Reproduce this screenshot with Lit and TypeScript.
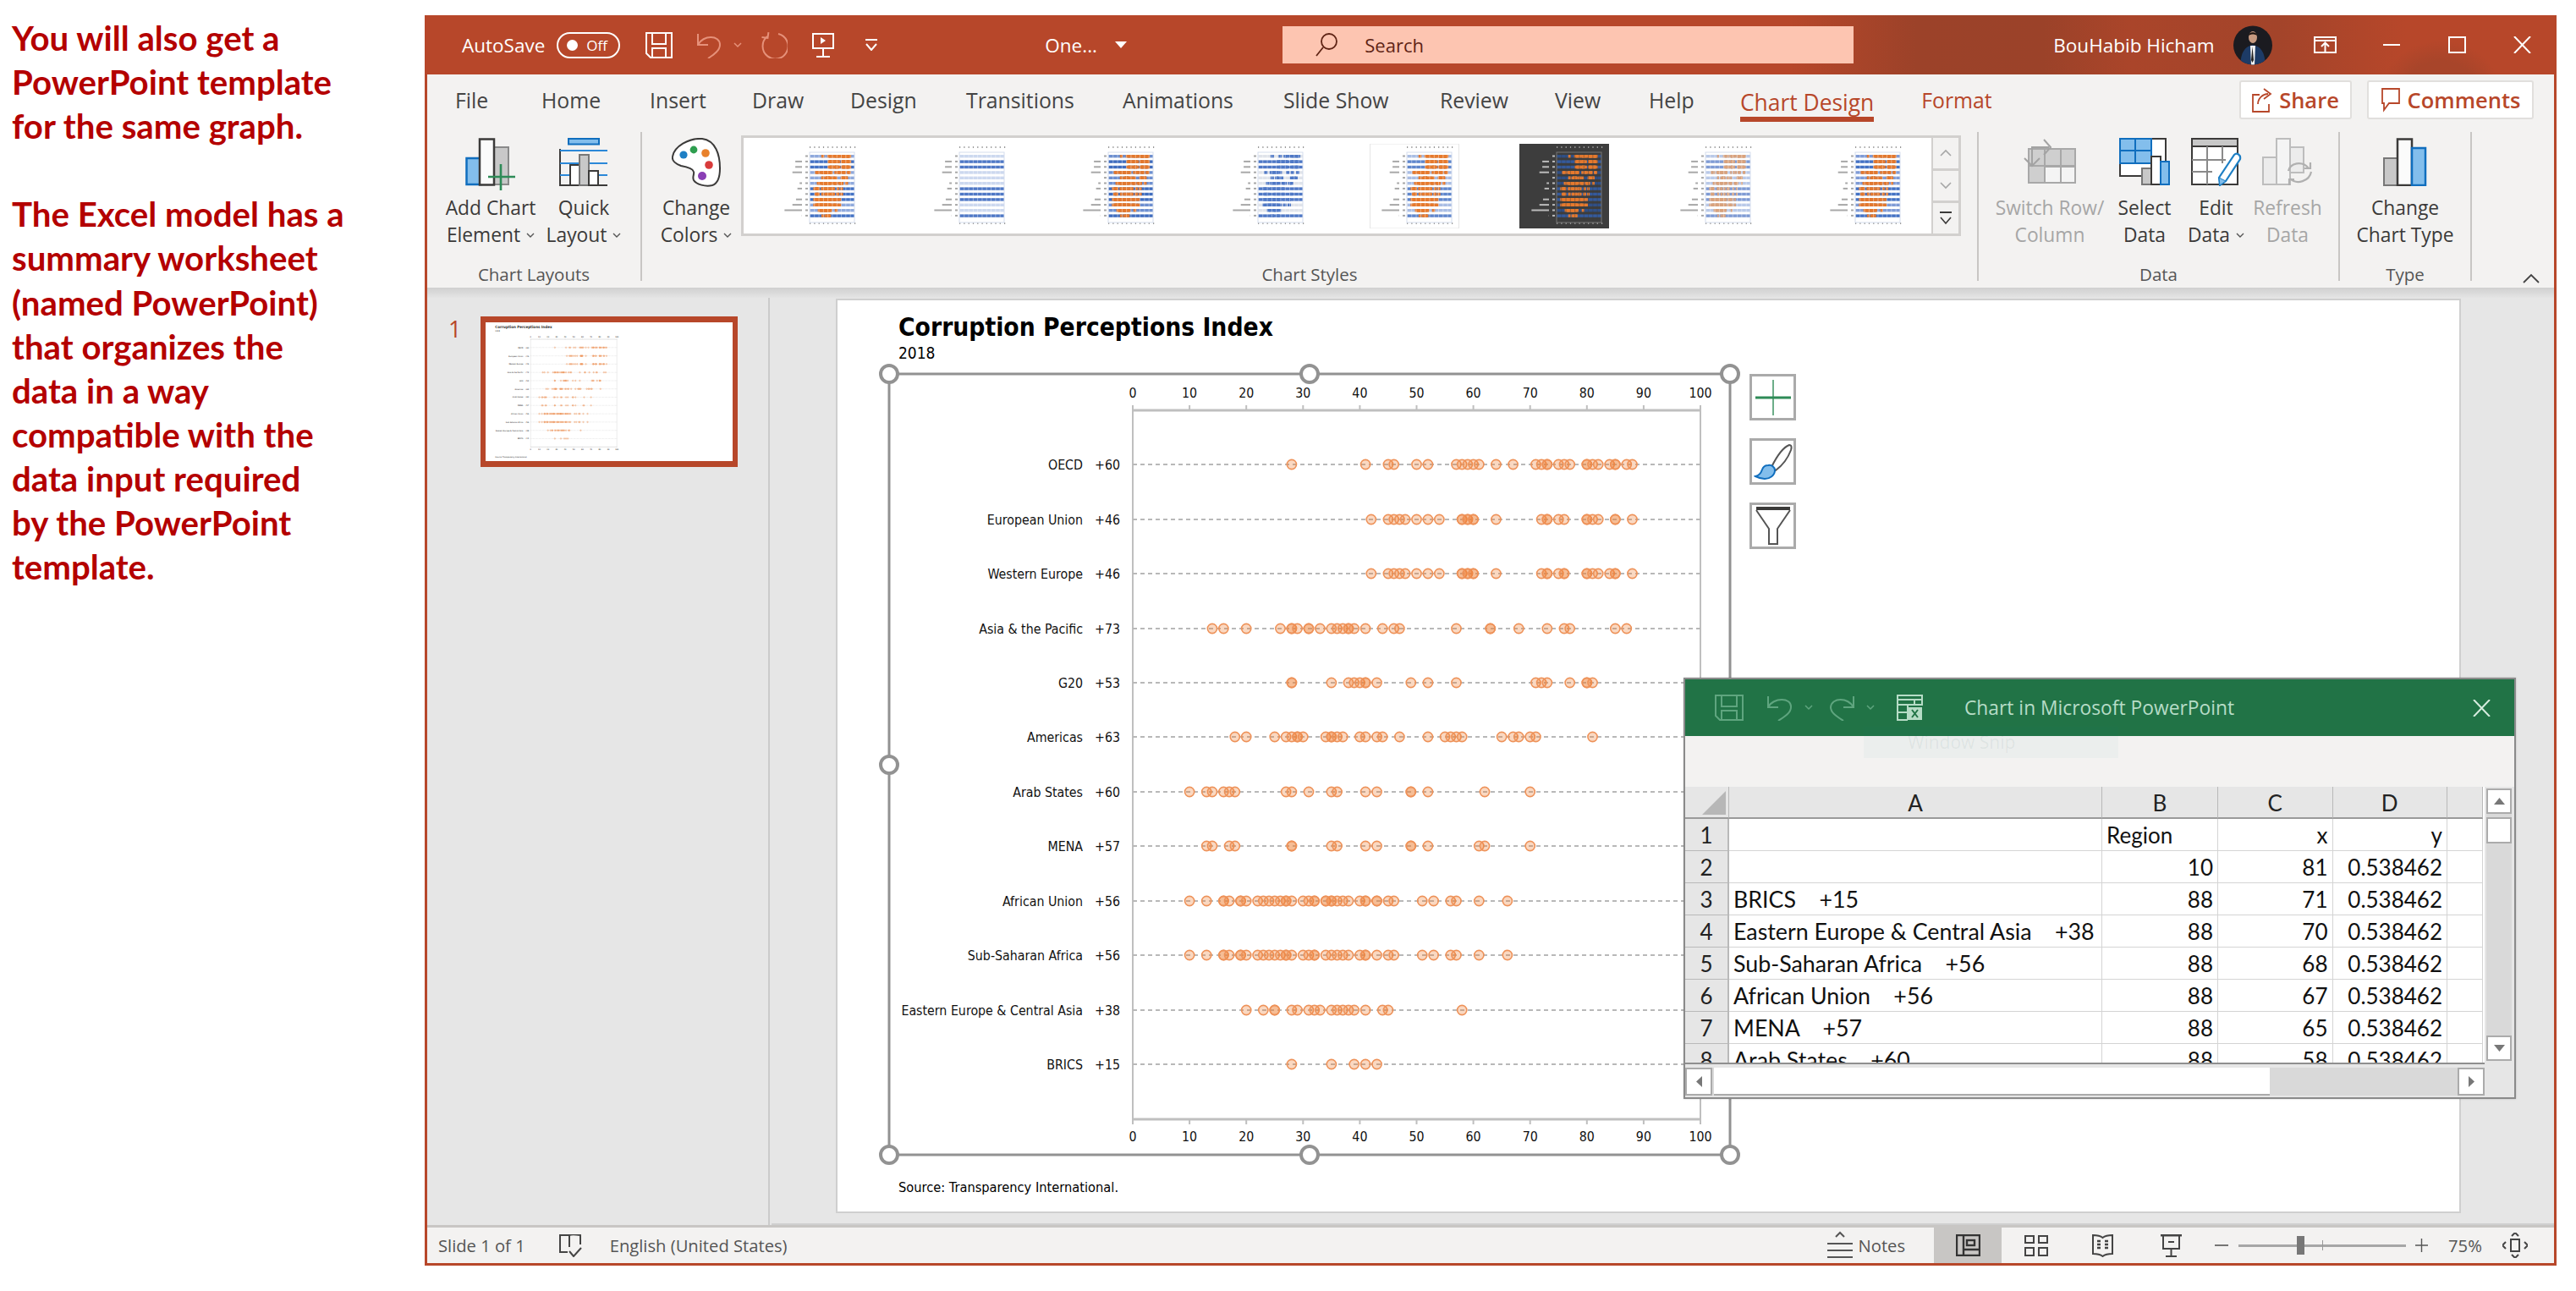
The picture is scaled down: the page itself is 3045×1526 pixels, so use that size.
import { LitElement, css, html, svg } from "lit";
import { customElement } from "lit/decorators.js";

type Row = { name: string; delta: string; y: number; pts: number[] };

const rows: Row[] = [
  { name: "OECD", delta: "+60", y: 549, pts: [28,41,45,46,50,52,57,58,59,60,61,64,67,71,72,73,73,75,76,77,80,80,81,82,84,85,85,87,88] },
  { name: "European Union", delta: "+46", y: 614, pts: [42,45,46,47,48,50,52,54,58,58,59,59,60,60,64,72,73,73,75,76,80,80,81,82,85,85,88] },
  { name: "Western Europe", delta: "+46", y: 678, pts: [42,45,46,47,48,50,52,54,58,58,59,59,60,60,64,72,73,73,75,76,76,80,80,81,82,84,85,85,88] },
  { name: "Asia & the Pacific", delta: "+73", y: 743, pts: [14,16,20,26,28,28,29,31,31,33,35,36,37,38,38,39,41,44,46,47,57,63,63,68,73,76,77,85,87] },
  { name: "G20", delta: "+53", y: 807, pts: [28,28,35,38,39,40,41,41,43,49,52,57,71,72,73,77,80,80,81] },
  { name: "Americas", delta: "+63", y: 871, pts: [18,20,25,27,28,29,29,30,34,35,35,36,37,40,41,43,44,47,52,55,56,57,58,65,67,68,70,71,81] },
  { name: "Arab States", delta: "+60", y: 936, pts: [10,13,14,16,17,18,27,28,31,35,36,41,43,49,49,52,62,70] },
  { name: "MENA", delta: "+57", y: 1000, pts: [13,14,17,18,28,28,35,36,41,43,49,49,52,61,62,70] },
  { name: "African Union", delta: "+56", y: 1065, pts: [10,13,16,16,17,19,19,20,22,23,24,25,26,27,27,28,30,31,32,32,34,34,35,35,36,37,38,40,41,41,43,43,45,46,51,53,56,57,61,66] },
  { name: "Sub-Saharan Africa", delta: "+56", y: 1129, pts: [10,13,16,16,17,19,19,20,22,23,24,25,26,27,27,28,30,31,32,32,34,35,36,37,38,40,41,41,43,45,46,51,53,56,57,61,66] },
  { name: "Eastern Europe & Central Asia", delta: "+38", y: 1194, pts: [20,23,25,25,28,29,31,32,33,35,36,37,38,39,41,44,45,58] },
  { name: "BRICS", delta: "+15", y: 1258, pts: [28,35,39,41,43] },
];

const X0 = 1339;
const UNIT = 6.71;
const ticks = [0, 10, 20, 30, 40, 50, 60, 70, 80, 90, 100];
const px = (v: number) => X0 + v * UNIT;

// plot shared by the slide and its thumbnail, in page coordinates
const plot = () => svg`
  <line class="axis-side" x1=${X0} y1="485" x2=${X0} y2="1323"></line>
  <line class="axis-side" x1="2010" y1="485" x2="2010" y2="1323"></line>
  <line class="axis" x1=${X0 - 1} y1="485" x2="2011" y2="485"></line>
  <line class="axis" x1=${X0 - 1} y1="1323" x2="2011" y2="1323"></line>
  ${ticks.map(
    (t) => svg`
      <line class="axis-side" x1=${px(t)} y1="479" x2=${px(t)} y2="485"></line>
      <line class="axis-side" x1=${px(t)} y1="1323" x2=${px(t)} y2="1329"></line>
      <text class="lbl" x=${px(t)} y="470" text-anchor="middle">${t}</text>
      <text class="lbl" x=${px(t)} y="1349" text-anchor="middle">${t}</text>`,
  )}
  ${rows.map(
    (r) => svg`
      <line class="dash" x1=${X0} y1=${r.y} x2="2010" y2=${r.y}></line>
      <text class="lbl" x="1280" y=${r.y + 6} text-anchor="end">${r.name}</text>
      <text class="lbl" x="1324" y=${r.y + 6} text-anchor="end">${r.delta}</text>
      ${r.pts.map((p) => svg`<circle class="dot" cx=${px(p)} cy=${r.y} r="5.6"></circle>`)}`,
  )}
`;

const handles = [
  [1051, 442], [1548, 442], [2045, 442],
  [1051, 904],
  [1051, 1365], [1548, 1365], [2045, 1365],
];

type ThumbStyle = { bg: string; light: string; dark: string; orange: string; w: number; frame?: string; seg?: boolean };

const thumbs: ThumbStyle[] = [
  { bg: "#fff", light: "#8fa9dc", dark: "#4472c4", orange: "#e67a2e", w: 3.5 },
  { bg: "#fff", light: "#ccd8ef", dark: "#4f78c6", orange: "", w: 0 },
  { bg: "#fff", light: "#6d8fd0", dark: "#3f6cbe", orange: "#e2782f", w: 3.5 },
  { bg: "#fff", light: "#dfe3ea", dark: "#4f78c6", orange: "", w: 4, seg: true },
  { bg: "#fff", light: "#a9bde4", dark: "#5f86cc", orange: "#e67a2e", w: 3.5, frame: "#e6e6e6" },
  { bg: "#3d3d3d", light: "#2f4f86", dark: "#345a9c", orange: "#e67a2e", w: 3, frame: "#3d3d3d" },
  { bg: "#fff", light: "#b9c9e8", dark: "#7f9bd4", orange: "#d9a27c", w: 2 },
  { bg: "#fff", light: "#7f9bd6", dark: "#4472c4", orange: "#e2782f", w: 3 },
];
const darkRows = [1, 2, 6, 7, 8, 11];

const thumbChart = (s: ThumbStyle) => html`
  <svg class="thumb" width="116" height="100" viewBox="0 0 116 100">
    <rect x=${s.frame ? 5.5 : 0} y="0" width=${s.frame ? 105 : 116} height="100" fill=${s.bg} stroke=${s.frame ?? "none"}></rect>
    ${ticks.map(
      (t) => svg`
        <rect x=${49 + t * 0.53} y="3" width="1.2" height="2" fill="#999"></rect>
        <rect x=${49 + t * 0.53} y="93" width="1.2" height="2" fill="#999"></rect>`,
    )}
    ${rows.map((r, i) => {
      const y = 13 + i * 6.4;
      const dark = darkRows.includes(i);
      return svg`
        <rect x=${44 - r.name.length * 0.85} y=${y + 0.5} width=${r.name.length * 0.85 - 4} height="2" fill=${s.bg === "#fff" ? "#a8a8a8" : "#bbb"}></rect>
        <rect x="44" y=${y + 0.5} width="3" height="2" fill=${s.bg === "#fff" ? "#a8a8a8" : "#bbb"}></rect>
        <rect x="49" y=${y} width="53" height="3.4" fill=${dark ? s.dark : s.light}></rect>
        ${s.seg
          ? r.pts.filter((_, n) => n % 3 === 0).map((p) => svg`<rect x=${49 + p * 0.53} y=${y} width="4" height="3.4" fill="#4f78c6"></rect>`)
          : s.orange
            ? r.pts.map((p) => svg`<rect x=${48 + p * 0.53} y=${y} width=${s.w} height="3.4" fill=${s.orange}></rect>`)
            : ""}`;
    })}
    ${ticks.map((t) => svg`<rect x=${49 + t * 0.53} y="10" width="0.9" height="83" fill=${s.bg} opacity="0.45"></rect>`)}
    <rect x="49" y="10" width="53" height="83" fill="none" stroke=${s.bg === "#fff" ? "#d5dded" : "#777"}></rect>
  </svg>
`;

const chev = html`<svg class="chev" width="10" height="7" viewBox="0 0 10 7"><path d="M1 1l4 4 4-4" fill="none" stroke="#555" stroke-width="1.4"/></svg>`;

const icons = {
  addChart: html`<svg width="60" height="62" viewBox="0 0 60 62">
    <rect x="22" y="11" width="29" height="44" fill="#c8c8c8" stroke="#8a8a8a" stroke-width="2"/>
    <rect x="1.5" y="24" width="17" height="31" fill="#83beec" stroke="#106ebe" stroke-width="2.5"/>
    <rect x="17" y="1.5" width="17" height="54" fill="#fbfbfb" stroke="#3b3a39" stroke-width="2.5"/>
    <path d="M42 31v31M27 46h32" stroke="#2e8b57" stroke-width="2.6"/>
  </svg>`,
  quick: html`<svg width="58" height="58" viewBox="0 0 58 58">
    <path d="M1 13v43h56" fill="none" stroke="#3b3a39" stroke-width="2"/>
    <path d="M1 15h56M1 30h56M1 44h56" stroke="#2b88d8" stroke-width="2"/>
    <rect x="11" y="1" width="36" height="6.5" fill="#83beec" stroke="#106ebe" stroke-width="2"/>
    <rect x="13" y="32" width="11" height="24" fill="#fff" stroke="#3b3a39" stroke-width="2"/>
    <rect x="24" y="20" width="11" height="36" fill="#c8c8c8" stroke="#777" stroke-width="2"/>
    <rect x="35" y="39" width="11" height="17" fill="#fff" stroke="#3b3a39" stroke-width="2"/>
  </svg>`,
  palette: html`<svg width="58" height="58" viewBox="0 0 58 58">
    <path d="M36 1C20 0 3 10 1 22c-1 5 4 9 10 11 6 1 14 3 15 7 1 3-2 6 0 10 3 5 14 8 22 6 6-2 9-9 9-20C57 20 52 3 36 1z" fill="#fff" stroke="#3b3a39" stroke-width="2"/>
    <circle cx="14" cy="20" r="4.6" fill="#1e7fc4"/><circle cx="26" cy="14" r="4.4" fill="#2e9e4f"/>
    <circle cx="40" cy="18" r="4.8" fill="#e8812b"/><circle cx="44" cy="32" r="4.8" fill="#d83b3b"/>
    <circle cx="36" cy="45" r="5" fill="#8a3fb5"/>
  </svg>`,
  switchRow: html`<svg width="62" height="54" viewBox="0 0 62 54">
    <path d="M6 13h55v40H6z" fill="#cfcfcf" stroke="#a8a8a8" stroke-width="2"/>
    <path d="M25 34h36v19H25z" fill="#f4f4f4" stroke="#a8a8a8" stroke-width="2"/>
    <path d="M44 13v40M25 13v40M6 33h55" stroke="#a8a8a8" stroke-width="2" fill="none"/>
    <path d="M10 32V11h20M24 2l8 9-8 9M1 24l9 9 9-9" fill="none" stroke="#a3a3a3" stroke-width="2"/>
  </svg>`,
  select: html`<svg width="60" height="56" viewBox="0 0 60 56">
    <rect x="1" y="1" width="54" height="44" fill="#fff" stroke="#3b3a39" stroke-width="2"/>
    <rect x="1" y="1" width="37" height="29" fill="#83beec" stroke="#106ebe" stroke-width="2"/>
    <path d="M19 1v29M1 15h37" stroke="#106ebe" stroke-width="2"/>
    <rect x="27" y="36" width="13" height="19" fill="#c8c8c8" stroke="#777" stroke-width="2"/>
    <rect x="38" y="22" width="11" height="33" fill="#fff" stroke="#3b3a39" stroke-width="2"/>
    <rect x="49" y="28" width="10" height="27" fill="#83beec" stroke="#106ebe" stroke-width="2"/>
  </svg>`,
  edit: html`<svg width="60" height="57" viewBox="0 0 60 57">
    <rect x="1" y="1" width="54" height="54" fill="#fff" stroke="#3b3a39" stroke-width="2"/>
    <rect x="1" y="1" width="54" height="9" fill="#c8c8c8" stroke="#3b3a39" stroke-width="2"/>
    <path d="M19 10v45M37 10v20M1 26h40M1 40h24" stroke="#8a8a8a" stroke-width="2"/>
    <path d="M51 20c3-3 8 0 7 5L41 51l-7 5-1-9z" fill="#fff" stroke="#1e7fc4" stroke-width="2.2"/>
    <path d="M33 47l8 4-7 5z" fill="#83beec" stroke="#1e7fc4"/>
  </svg>`,
  refresh: html`<svg width="60" height="61" viewBox="0 0 60 61">
    <rect x="1" y="23" width="16" height="32" fill="#ececec" stroke="#bdbdbd" stroke-width="2"/>
    <rect x="17" y="1" width="16" height="54" fill="#f4f4f4" stroke="#bdbdbd" stroke-width="2"/>
    <rect x="33" y="11" width="16" height="30" fill="#ececec" stroke="#bdbdbd" stroke-width="2"/>
    <path d="M31 39c2-9 16-13 24-3M58 40c-2 11-17 16-25 8M50 36h7v-7M38 49h-6v7" fill="none" stroke="#b0b0b0" stroke-width="2.2"/>
  </svg>`,
  change: html`<svg width="52" height="57" viewBox="0 0 52 57">
    <rect x="1" y="24" width="17" height="32" fill="#c8c8c8" stroke="#777" stroke-width="2"/>
    <rect x="17" y="1.5" width="17" height="54.5" fill="#fbfbfb" stroke="#3b3a39" stroke-width="2.5"/>
    <rect x="34" y="12" width="16" height="44" fill="#83beec" stroke="#106ebe" stroke-width="2.5"/>
  </svg>`,
};

type Btn = { a: string; b: string; chev?: boolean; icon: unknown; w: number; off?: boolean };

const layoutBtns: Btn[] = [
  { a: "Add Chart", b: "Element", chev: true, icon: icons.addChart, w: 110 },
  { a: "Quick", b: "Layout", chev: true, icon: icons.quick, w: 110 },
];
const dataBtns: Btn[] = [
  { a: "Switch Row/", b: "Column", icon: icons.switchRow, w: 138, off: true },
  { a: "Select", b: "Data", icon: icons.select, w: 86 },
  { a: "Edit", b: "Data", chev: true, icon: icons.edit, w: 83 },
  { a: "Refresh", b: "Data", icon: icons.refresh, w: 86, off: true },
];

// each tab's slot, start of the label to start of the next one
const tabs: [string, number][] = [
  ["File", 102], ["Home", 128], ["Insert", 121], ["Draw", 116], ["Design", 137], ["Transitions", 185],
  ["Animations", 190], ["Slide Show", 185], ["Review", 136], ["View", 111], ["Help", 108],
];

const sheet = [
  ["", "Region", "x", "y"],
  ["", "10", "81", "0.538462"],
  ["BRICS    +15", "88", "71", "0.538462"],
  ["Eastern Europe & Central Asia    +38", "88", "70", "0.538462"],
  ["Sub-Saharan Africa    +56", "88", "68", "0.538462"],
  ["African Union    +56", "88", "67", "0.538462"],
  ["MENA    +57", "88", "65", "0.538462"],
  ["Arab States    +60", "88", "58", "0.538462"],
];

@customElement("app-root")
export class AppRoot extends LitElement {
  static styles = css`
    :host {
      display: flex;
      width: 3045px;
      height: 1526px;
      background: #fff;
      font-family: "Open Sans", sans-serif;
      overflow: hidden;
    }
    .note {
      width: 502px;
      flex: none;
      box-sizing: border-box;
      padding: 19px 0 0 14px;
      color: #b40000;
      font: 700 40.2px/52.1px Lato, sans-serif;
      white-space: nowrap;
    }
    .note p { margin: 0 0 52.1px; }

    .window {
      position: relative;
      width: 2520px;
      height: 1478px;
      margin-top: 18px;
      box-sizing: border-box;
      border: solid #b7472a;
      border-width: 0 3px 3px 3px;
      background: #e6e6e6;
      display: flex;
      flex-direction: column;
      overflow: hidden;
    }

    .titlebar {
      height: 70px;
      flex: none;
      display: flex;
      align-items: center;
      color: #fff;
      font-size: 22.5px;
      background:
        radial-gradient(ellipse 70px 60px at 2380px 90px, #a8452a 0 60%, transparent 100%),
        linear-gradient(90deg, #b7472a 0, #b7472a 64%, #9c4229 70%, #9b4229 76%, #aa452a 80%, #a3442a 87%, #b7472a 93%);
    }
    .titlebar svg { flex: none; }
    .autosave { margin-left: 41px; }
    .toggle {
      margin-left: 14px;
      width: 75px;
      height: 31px;
      box-sizing: border-box;
      border: 2px solid #fff;
      border-radius: 16px;
      display: flex;
      align-items: center;
      gap: 10px;
      padding-left: 10px;
      font-size: 17px;
    }
    .toggle i { width: 13px; height: 13px; border-radius: 50%; background: #fff; }
    .doc { margin-left: 198px; width: 83px; }
    .search {
      margin-left: 184px;
      width: 675px;
      height: 44px;
      flex: none;
      display: flex;
      align-items: center;
      gap: 32px;
      padding-left: 39px;
      box-sizing: border-box;
      background: #fdc5b1;
      color: #5f2415;
      font-size: 22px;
    }
    .user { margin-left: 236px; white-space: nowrap; }
    .avatar { margin-left: 22px; }

    .tabbar {
      height: 67px;
      flex: none;
      display: flex;
      align-items: flex-start;
      background: #f3f2f1;
      color: #444;
      font-size: 24.8px;
      padding-left: 33px;
    }
    .tab { flex: none; padding-top: 14px; line-height: 33px; white-space: nowrap; }
    .tab.active {
      color: #b7472a;
      font-weight: 500;
      font-size: 26.4px;
      margin-right: 56px;
      border-bottom: 6px solid #b7472a;
      height: 33px;
      padding-top: 17px;
    }
    .tab.format { color: #b7472a; }
    .share {
      margin-left: auto;
      display: flex;
      gap: 18px;
      padding: 7px 24px 0 0;
    }
    .pill {
      height: 46px;
      flex: none;
      box-sizing: border-box;
      display: flex;
      align-items: center;
      justify-content: center;
      gap: 8px;
      background: #fff;
      border: 2px solid #e1dfdd;
      border-radius: 3px;
      color: #b7472a;
      font-weight: 600;
      font-size: 25.5px;
    }
    .pill-share { width: 133px; }
    .pill-comments { width: 197px; }

    .ribbon {
      height: 185px;
      flex: none;
      display: flex;
      background: #f3f2f1;
      color: #3b3a39;
      font-size: 22.8px;
    }
    .group { display: flex; flex-direction: column; }
    .group .row { height: 155px; display: flex; }
    .group .name { height: 28px; line-height: 28px; text-align: center; font-size: 20.5px; color: #555; }
    .sep { width: 2px; height: 176px; margin-top: 1px; background: #c8c6c4; flex: none; }
    .btn { display: flex; flex-direction: column; align-items: center; flex: none; }
    .btn .ic { height: 75px; padding-top: 8px; box-sizing: border-box; }
    .btn .t { line-height: 32px; white-space: nowrap; display: flex; align-items: center; gap: 7px; }
    .btn.off { color: #a6a6a6; }
    .g-layouts { width: 252px; padding-left: 20px; box-sizing: border-box; }
    .g-layouts .name { margin-left: -20px; }
    .g-styles { width: 1578px; }
    .g-styles .btn { margin: 0 0 0 11px; width: 106px; }
    .g-data { width: 425px; }
    .g-data .row { padding-left: 15px; }
    .g-type { width: 154px; }
    .g-type .btn { width: 154px; }
    .g-end { flex: 1; position: relative; }
    .collapse { position: absolute; right: 17px; bottom: 5px; }

    .gallery {
      margin-top: 5px;
      width: 1442px;
      height: 119px;
      box-sizing: border-box;
      border: 3px solid #d2d0ce;
      background: #fff;
      display: flex;
    }
    .cells { width: 1409px; display: flex; overflow: hidden; margin-left: -1px; }
    .cell { width: 176.5px; flex: none; display: flex; justify-content: center; align-items: center; }
    .thumb { filter: blur(0.7px); }
    .scroll { width: 30px; display: flex; flex-direction: column; background: #f3f2f1; border-left: 2px solid #d2d0ce; }
    .scroll div { flex: 1; display: flex; align-items: center; justify-content: center; border-bottom: 3px solid #d2d0ce; }
    .scroll div:last-child { border-bottom: 0; }

    .main { flex: 1; display: flex; min-height: 0; position: relative; }
    .main::before {
      content: "";
      position: absolute;
      inset: 0 0 auto 0;
      height: 12px;
      background: linear-gradient(#d0d0d0, #e4e4e4);
    }
    .pane { width: 405px; flex: none; border-right: 2px solid #cbcbcb; box-sizing: border-box; display: flex; padding: 34px 0 0 25px; }
    .num { width: 38px; color: #b7472a; font-size: 27px; line-height: 30px; flex: none; }
    .mini {
      width: 304px;
      height: 178px;
      box-sizing: border-box;
      border: solid #b7472a;
      border-width: 7px 6px;
      background: #fff;
      flex: none;
      line-height: 0;
    }
    .editor { flex: 1; padding: 13px 0 0 78px; position: relative; }
    .slide {
      width: 1921px;
      height: 1081px;
      box-sizing: border-box;
      background: #fff;
      border: 2px solid #cfcfcf;
      padding: 15px 0 0 72px;
      position: relative;
    }
    .ctitle { font: 700 29.7px/34px "DejaVu Sans", sans-serif; font-stretch: condensed; color: #000; white-space: nowrap; }
    .csub { font: 19px/26px "DejaVu Sans", sans-serif; font-stretch: condensed; color: #000; }
    .chart { display: block; margin: -2px 0 0 -27px; }
    .source { font: 16.3px/20px "DejaVu Sans", sans-serif; font-stretch: condensed; color: #000; margin-top: 14px; }
    .rule { position: absolute; left: 2px; right: 0; bottom: 0; height: 2px; background: #cfcfcf; }

    svg .lbl { font-family: "DejaVu Sans", sans-serif; font-stretch: condensed; font-size: 15.8px; fill: #111; }
    svg .mini-title { font: 700 29.7px "DejaVu Sans", sans-serif; font-stretch: condensed; fill: #333; }
    svg .axis { stroke: #bfbfbf; stroke-width: 3; }
    svg .axis-side { stroke: #bfbfbf; stroke-width: 2; }
    svg .dash { stroke: #b8b8b8; stroke-width: 2; stroke-dasharray: 5 4; }
    svg .dot { fill: rgba(237, 125, 49, 0.3); stroke: #ee9259; stroke-width: 1.6; }
    svg .frame { fill: none; stroke: #929292; stroke-width: 3; }
    svg .handle { fill: #fff; stroke: #929292; stroke-width: 4; }

    .tools { position: absolute; left: 1078px; top: 87px; display: flex; flex-direction: column; gap: 21px; }
    .tool { width: 55px; height: 55px; box-sizing: border-box; border: 3px solid #aaa; background: #fff; display: flex; align-items: center; justify-content: center; }

    .status {
      height: 42px;
      flex: none;
      box-sizing: content-box;
      border-top: 3px solid #c8c6c4;
      background: #f3f2f1;
      display: flex;
      align-items: center;
      padding-left: 13px;
      color: #555;
      font-size: 20.2px;
    }
    .status > * { flex: none; }
    .notes { margin-left: 1228px; display: flex; align-items: center; gap: 6px; }
    .normal { margin-left: 34px; width: 80px; height: 42px; background: #c8c6c4; display: flex; align-items: center; justify-content: center; }
    .slider { position: relative; width: 198px; height: 22px; margin: 0 11px 0 12px; }
    .slider::before { content: ""; position: absolute; left: 0; right: 0; top: 10px; height: 3px; background: #a6a6a6; }
    .slider i { position: absolute; left: 69px; top: 0; width: 9px; height: 22px; background: #777; }
    .slider b { position: absolute; left: 99px; top: 5px; width: 1px; height: 12px; background: #999; }

    .excel {
      position: absolute;
      left: 1485px;
      top: 783px;
      width: 984px;
      height: 498px;
      box-sizing: border-box;
      border: 2px solid #8a8a8a;
      background: #e6e6e6;
      display: flex;
      flex-direction: column;
      box-shadow: 0 0 2px rgba(0, 0, 0, 0.2);
    }
    .xtitle {
      height: 67px;
      flex: none;
      background: #217346;
      display: flex;
      align-items: center;
      color: #b6dcc6;
      font-size: 22.8px;
      padding-left: 35px;
    }
    .xtitle .tbl { margin-left: 26px; }
    .xtitle .cap { margin-left: 49px; white-space: nowrap; }
    .xtitle .close { margin-left: auto; margin-right: 28px; }
    .xribbon { height: 60px; flex: none; background: #f3f2f1; position: relative; }
    .snip {
      position: absolute;
      left: 211px;
      top: -11px;
      width: 301px;
      height: 37px;
      background: rgba(40, 140, 130, 0.035);
      color: rgba(30, 90, 90, 0.08);
      font-size: 21px;
      line-height: 37px;
      padding-left: 52px;
      box-sizing: border-box;
      white-space: nowrap;
    }
    .xsheet { flex: 1; display: flex; min-height: 0; }
    .xleft { width: 945px; flex: none; display: flex; flex-direction: column; }
    .xgrid {
      height: 326px;
      flex: none;
      display: grid;
      grid-template-columns: 52px 441px 137px 135.5px 135.5px 42px;
      grid-auto-rows: 38px;
      overflow: hidden;
      background: #fff;
      border-bottom: 2px solid #8f8f8f;
      font: 26px/38px Lato, sans-serif;
      color: #111;
    }
    .cell-x { box-sizing: border-box; border: solid #d4d4d4; border-width: 0 1px 1px 0; padding: 0 5px; white-space: pre; overflow: hidden; }
    .cell-x.a { font-size: 26.8px; }
    .cell-x.r { text-align: right; }
    .cell-x.h { background: #e6e6e6; text-align: center; border-color: #b9b9b9; color: #222; }
    .cell-x.h.top { border-bottom: 2px solid #9a9a9a; }
    .cell-x.h.rn { border-right: 2px solid #b9b9b9; padding: 0; }
    .corner { position: relative; }
    .corner::after {
      content: "";
      position: absolute;
      right: 3px;
      bottom: 3px;
      border-style: solid;
      border-width: 0 0 28px 28px;
      border-color: transparent transparent #b7b7b7 transparent;
    }
    .hscroll { margin: 4px 0 0 0; height: 33px; display: flex; gap: 2px; background: #d9d9d9; }
    .hbtn { width: 32px; box-sizing: border-box; background: #fff; border: 2px solid #ababab; display: flex; align-items: center; justify-content: center; flex: none; }
    .hthumb { width: 657px; background: #fff; border-bottom: 2px solid #ababab; flex: none; }
    .hrest { flex: 1; }
    .vscroll { width: 30px; margin: 2px 0 0 2px; height: 322px; background: #d9d9d9; display: flex; flex-direction: column; }
    .vbtn { height: 30px; box-sizing: border-box; background: #fff; border: 2px solid #ababab; display: flex; align-items: center; justify-content: center; flex: none; }
    .vthumb { height: 31px; margin-top: 4px; background: #fff; border: 2px solid #ababab; box-sizing: border-box; flex: none; }
    .vbtn.down { margin-top: auto; }
  `;

  render() {
    return html`
      <div class="note">
        <p>You will also get a<br />PowerPoint template<br />for the same graph.</p>
        <p>
          The Excel model has a<br />summary worksheet<br />(named PowerPoint)<br />that organizes the<br />data in a way<br />
          compatible with the<br />data input required<br />by the PowerPoint<br />template.
        </p>
      </div>
      <div class="window">
        ${this.renderTitle()} ${this.renderTabs()} ${this.renderRibbon()}
        <div class="main">
          <div class="pane">
            <div class="num">1</div>
            <div class="mini">
              <svg width="292" height="164" viewBox="989 353 1921 1080">
                <text class="mini-title" x="1063" y="398">Corruption Perceptions Index</text>
                <text x="1063" y="423" class="lbl">2018</text>
                ${plot()}
                <text x="1063" y="1409" class="lbl">Source: Transparency International.</text>
              </svg>
            </div>
          </div>
          <div class="editor">
            <div class="slide">
              <div class="ctitle">Corruption Perceptions Index</div>
              <div class="csub">2018</div>
              <svg class="chart" width="1025" height="952" viewBox="1035 428 1025 952">
                <rect class="frame" x="1051" y="442" width="994" height="923"></rect>
                ${plot()}
                ${handles.map(([x, y]) => svg`<circle class="handle" cx=${x} cy=${y} r="10"></circle>`)}
              </svg>
              <div class="source">Source: Transparency International.</div>
              <div class="tools">
                <div class="tool">
                  <svg width="42" height="42" viewBox="0 0 42 42"><path d="M21 0v42" stroke="#2e8b57" stroke-width="1.4"/><path d="M0 21h42" stroke="#2e8b57" stroke-width="3"/></svg>
                </div>
                <div class="tool">
                  <svg width="46" height="44" viewBox="0 0 46 44">
                    <path d="M42 2c3 0 3 3 2 6-3 8-10 18-18 24l-5-4C26 18 34 5 42 2z" fill="#fff" stroke="#555" stroke-width="2"/>
                    <path d="M17 26c4-1 8 2 8 6 0 6-6 10-12 10-5 0-9-2-11-3 5-1 7-5 8-8 1-3 4-5 7-5z" fill="#83beec" stroke="#106ebe" stroke-width="2"/>
                  </svg>
                </div>
                <div class="tool">
                  <svg width="44" height="46" viewBox="0 0 44 46"><path d="M2 2h40" stroke="#3b3a39" stroke-width="4"/><path d="M2 4l15 22v18h10V26L42 4" fill="#fff" stroke="#555" stroke-width="2"/></svg>
                </div>
              </div>
            </div>
            <div class="rule"></div>
          </div>
        </div>
        ${this.renderStatus()} ${this.renderExcel()}
      </div>
    `;
  }

  private renderTitle() {
    return html`<div class="titlebar">
      <span class="autosave">AutoSave</span>
      <span class="toggle"><i></i>Off</span>
      <svg style="margin-left:30px" width="32" height="31" viewBox="0 0 32 31" fill="none" stroke="#fff" stroke-width="2"><path d="M1 1h30v29H6l-5-5z"/><path d="M8 1v13h16V1"/><path d="M8 30V19h16v11"/></svg>
      <svg style="margin-left:28px" width="30" height="31" viewBox="0 0 30 31" fill="none" stroke="#e6917a" stroke-width="2"><path d="M2 2v13h12"/><path d="M2 15C8 3 28 3 28 15c0 7-8 12-14 16"/></svg>
      <svg style="margin-left:14px" width="10" height="7" viewBox="0 0 10 7"><path d="M1 1l4 4 4-4" fill="none" stroke="#e6917a" stroke-width="1.5"/></svg>
      <svg style="margin-left:21px" width="33" height="32" viewBox="0 0 33 32" fill="none" stroke="#e6917a" stroke-width="2"><path d="M22 3A15 15 0 1 1 9 6"/><path d="M10 1v7h-7" transform="rotate(8 10 4)"/></svg>
      <svg style="margin-left:28px" width="28" height="29" viewBox="0 0 28 29" fill="none" stroke="#fff" stroke-width="2"><path d="M2 1h24v17H2z"/><path d="M14 18v10M6 28h16"/><path d="M11 5l6 4-6 4z" fill="#fff" stroke="none"/></svg>
      <svg style="margin-left:36px" width="14" height="14" viewBox="0 0 14 14" fill="none" stroke="#fff" stroke-width="2"><path d="M0 1h14M1 6l6 7 6-7"/></svg>
      <span class="doc">One...</span>
      <svg width="14" height="8" viewBox="0 0 14 8"><path d="M0 0h14L7 8z" fill="#fff"/></svg>
      <div class="search">
        <svg width="26" height="28" viewBox="0 0 26 28" fill="none" stroke="#5f2415" stroke-width="1.8"><ellipse cx="16" cy="10" rx="9" ry="9"/><path d="M9 17L1 27"/></svg>
        Search
      </div>
      <span class="user">BouHabib Hicham</span>
      <svg class="avatar" width="46" height="47" viewBox="0 0 46 47">
        <defs><clipPath id="av"><circle cx="23" cy="23.5" r="23"/></clipPath></defs>
        <g clip-path="url(#av)">
          <rect width="46" height="47" fill="#1b1b20"/>
          <path d="M8 47c1-15 5-22 15-24 10 2 14 9 15 24z" fill="#1d3b66"/>
          <path d="M20 24h6l-1 23h-4z" fill="#f2f2f2"/>
          <path d="M22.5 25l1.5 16-1.5 3-1.5-3z" fill="#222"/>
          <ellipse cx="23" cy="14" rx="5" ry="7" fill="#c79a80"/>
          <path d="M18 12c0-5 10-5 10 0-3-2-7-2-10 0z" fill="#1a120e"/>
        </g>
      </svg>
      <svg style="margin-left:49px" width="27" height="20" viewBox="0 0 27 20" fill="none" stroke="#fff" stroke-width="2"><path d="M1 1h25v18H1zM1 5h25M13.5 18V8M9 12l4.500-4.500 4.500 4.500"/></svg>
      <svg style="margin-left:55px" width="20" height="2" viewBox="0 0 20 2"><path d="M0 1h20" stroke="#fff" stroke-width="2"/></svg>
      <svg style="margin-left:57px" width="21" height="20" viewBox="0 0 21 20"><rect x="1" y="1" width="19" height="18" fill="none" stroke="#fff" stroke-width="2"/></svg>
      <svg style="margin-left:56px" width="21" height="20" viewBox="0 0 21 20"><path d="M1 0l19 20M20 0L1 20" stroke="#fff" stroke-width="2"/></svg>
    </div>`;
  }

  private renderTabs() {
    return html`<div class="tabbar">
      ${tabs.map(([t, w]) => html`<div class="tab" style="width:${w}px">${t}</div>`)}
      <div class="tab active">Chart Design</div>
      <div class="tab format">Format</div>
      <div class="share">
        <div class="pill pill-share">
          <svg width="24" height="30" viewBox="0 0 24 30" fill="none" stroke="#b7472a" stroke-width="1.8"><path d="M9 9H1v20h19v-9"/><path d="M7 20c0-7 6-12 12-12M14 2l8 6-8 6"/></svg>
          Share
        </div>
        <div class="pill pill-comments">
          <svg width="24" height="30" viewBox="0 0 24 30" fill="none" stroke="#b7472a" stroke-width="1.8"><path d="M2 2h20v17H10l-6 8v-8H2z"/></svg>
          Comments
        </div>
      </div>
    </div>`;
  }

  private renderBtn(b: Btn) {
    return html`<div class="btn ${b.off ? "off" : ""}" style="width:${b.w}px">
      <div class="ic">${b.icon}</div>
      <div class="t">${b.a}</div>
      <div class="t">${b.b}${b.chev ? chev : ""}</div>
    </div>`;
  }

  private renderRibbon() {
    return html`<div class="ribbon">
      <div class="group g-layouts">
        <div class="row">${layoutBtns.map((b) => this.renderBtn(b))}</div>
        <div class="name">Chart Layouts</div>
      </div>
      <div class="sep"></div>
      <div class="group g-styles">
        <div class="row">
          <div class="btn">
            <div class="ic">${icons.palette}</div>
            <div class="t">Change</div>
            <div class="t">Colors${chev}</div>
          </div>
          <div class="gallery">
            <div class="cells">${thumbs.map((s) => html`<div class="cell">${thumbChart(s)}</div>`)}</div>
            <div class="scroll">
              <div><svg width="14" height="9" viewBox="0 0 14 9"><path d="M1 8l6-6 6 6" fill="none" stroke="#a6a6a6" stroke-width="1.6"/></svg></div>
              <div><svg width="14" height="9" viewBox="0 0 14 9"><path d="M1 1l6 6 6-6" fill="none" stroke="#a6a6a6" stroke-width="1.6"/></svg></div>
              <div><svg width="14" height="18" viewBox="0 0 14 18"><path d="M0 2h14" stroke="#3b3a39" stroke-width="2"/><path d="M1 8l6 7 6-7" fill="none" stroke="#3b3a39" stroke-width="1.6"/></svg></div>
            </div>
          </div>
        </div>
        <div class="name">Chart Styles</div>
      </div>
      <div class="sep"></div>
      <div class="group g-data">
        <div class="row">${dataBtns.map((b) => this.renderBtn(b))}</div>
        <div class="name">Data</div>
      </div>
      <div class="sep"></div>
      <div class="group g-type">
        <div class="row">
          <div class="btn">
            <div class="ic">${icons.change}</div>
            <div class="t">Change</div>
            <div class="t">Chart Type</div>
          </div>
        </div>
        <div class="name">Type</div>
      </div>
      <div class="sep"></div>
      <div class="group g-end">
        <svg class="collapse" width="20" height="12" viewBox="0 0 20 12"><path d="M1 11l9-9 9 9" fill="none" stroke="#444" stroke-width="1.8"/></svg>
      </div>
    </div>`;
  }

  private renderStatus() {
    return html`<div class="status">
      <span>Slide 1 of 1</span>
      <svg style="margin-left:40px" width="27" height="27" viewBox="0 0 27 27" fill="none" stroke="#444" stroke-width="2"><path d="M12 1H1v20h9M12 1c2-1 6-1 13 0v11M12 1v14"/><path d="M12 20l5 6 9-10"/></svg>
      <span style="margin-left:33px">English (United States)</span>
      <div class="notes">
        <svg width="32" height="34" viewBox="0 0 32 34" fill="none" stroke="#555" stroke-width="2"><path d="M11 7l5-5 5 5M1 15h30M1 23h30M1 31h30"/></svg>
        Notes
      </div>
      <div class="normal">
        <svg width="29" height="26" viewBox="0 0 29 26" fill="none" stroke="#333" stroke-width="2.4"><path d="M1 1h27v24H1zM9 1v24M9 18h19"/><rect x="13" y="7" width="9" height="6"/></svg>
      </div>
      <svg style="margin-left:27px" width="28" height="25" viewBox="0 0 28 25" fill="none" stroke="#444" stroke-width="2"><rect x="1" y="1" width="10" height="8"/><rect x="17" y="1" width="10" height="8"/><rect x="1" y="15" width="10" height="9"/><rect x="17" y="15" width="10" height="9"/></svg>
      <svg style="margin-left:52px" width="25" height="27" viewBox="0 0 25 27" fill="none" stroke="#444" stroke-width="2"><path d="M1 1c5 0 9 1 11.500 3C15 2 19 1 24 1v22c-5 0-9 1-11.500 3C10 24 6 23 1 23z"/><path d="M6 8h4M6 12h4M6 16h4M15 8h4M15 12h4M15 16h4" stroke-width="2.4"/></svg>
      <svg style="margin-left:56px" width="25" height="27" viewBox="0 0 25 27" fill="none" stroke="#444" stroke-width="2"><path d="M0 1h25" stroke-width="3"/><path d="M3 1v16h19V1M12.500 17v9M6 26h13M9 9h7"/></svg>
      <svg style="margin-left:39px" width="16" height="2" viewBox="0 0 16 2"><path d="M0 1h16" stroke="#555" stroke-width="1.6"/></svg>
      <div class="slider"><i></i><b></b></div>
      <svg width="15" height="16" viewBox="0 0 15 16"><path d="M0 8h15M7.500 0v16" stroke="#555" stroke-width="1.4"/></svg>
      <span style="margin-left:24px">75%</span>
      <svg style="margin-left:24px" width="30" height="30" viewBox="0 0 30 30" fill="none" stroke="#444" stroke-width="2"><rect x="10" y="8" width="10" height="14"/><path d="M11 4l4-4 4 4M11 26l4 4 4-4M4 11l-4 4 4 4M26 11l4 4-4 4"/></svg>
    </div>`;
  }

  private renderExcel() {
    const letters = ["A", "B", "C", "D", ""];
    return html`<div class="excel">
      <div class="xtitle">
        <svg width="34" height="31" viewBox="0 0 34 31" fill="none" stroke="#5fa57f" stroke-width="2"><path d="M1 1h32v29H6l-5-5z"/><path d="M8 1v13h18V1M8 30V19h18v11"/></svg>
        <svg style="margin-left:27px" width="32" height="31" viewBox="0 0 32 31" fill="none" stroke="#5fa57f" stroke-width="2"><path d="M2 2v13h12"/><path d="M2 15C8 3 30 3 29 15c0 7-9 12-15 16"/></svg>
        <svg style="margin-left:13px" width="10" height="7" viewBox="0 0 10 7"><path d="M1 1l4 4 4-4" fill="none" stroke="#5fa57f" stroke-width="1.5"/></svg>
        <svg style="margin-left:20px" width="30" height="31" viewBox="0 0 30 31" fill="none" stroke="#5fa57f" stroke-width="2"><path d="M28 2v13H16"/><path d="M28 15C22 3 2 3 1 15c0 7 9 12 15 16"/></svg>
        <svg style="margin-left:13px" width="10" height="7" viewBox="0 0 10 7"><path d="M1 1l4 4 4-4" fill="none" stroke="#5fa57f" stroke-width="1.5"/></svg>
        <svg class="tbl" width="31" height="31" viewBox="0 0 31 31" fill="none" stroke="#b6dcc6" stroke-width="2"><path d="M1 1h29v11H1zM1 6h29M1 12v18h12M1 21h12M13 12v18M21 6v6"/><rect x="13" y="15" width="17" height="15" fill="#b6dcc6" stroke="none"/><path d="M18 18l7 9M25 18l-7 9" stroke="#217346"/></svg>
        <span class="cap">Chart in Microsoft PowerPoint</span>
        <svg class="close" width="21" height="20" viewBox="0 0 21 20"><path d="M1 0l19 20M20 0L1 20" stroke="#d7ecdf" stroke-width="2"/></svg>
      </div>
      <div class="xribbon"><div class="snip">Window Snip</div></div>
      <div class="xsheet">
        <div class="xleft">
          <div class="xgrid">
            <div class="cell-x h top corner"></div>
            ${letters.map((l) => html`<div class="cell-x h top">${l}</div>`)}
            ${sheet.map(
              (r, i) => html`
                <div class="cell-x h rn">${i + 1}</div>
                <div class="cell-x a">${r[0]}</div>
                <div class="cell-x ${r[1] === "Region" ? "" : "r"}">${r[1]}</div>
                <div class="cell-x r">${r[2]}</div>
                <div class="cell-x r">${r[3]}</div>
                <div class="cell-x"></div>
              `,
            )}
          </div>
          <div class="hscroll">
            <div class="hbtn"><svg width="7" height="13" viewBox="0 0 7 13"><path d="M7 0v13L0 6.500z" fill="#777"/></svg></div>
            <div class="hthumb"></div>
            <div class="hrest"></div>
            <div class="hbtn"><svg width="7" height="13" viewBox="0 0 7 13"><path d="M0 0v13l7-6.500z" fill="#777"/></svg></div>
          </div>
        </div>
        <div class="vscroll">
          <div class="vbtn"><svg width="13" height="8" viewBox="0 0 13 8"><path d="M0 8h13L6.500 0z" fill="#777"/></svg></div>
          <div class="vthumb"></div>
          <div class="vbtn down"><svg width="13" height="8" viewBox="0 0 13 8"><path d="M0 0h13L6.500 8z" fill="#777"/></svg></div>
        </div>
      </div>
    </div>`;
  }
}
